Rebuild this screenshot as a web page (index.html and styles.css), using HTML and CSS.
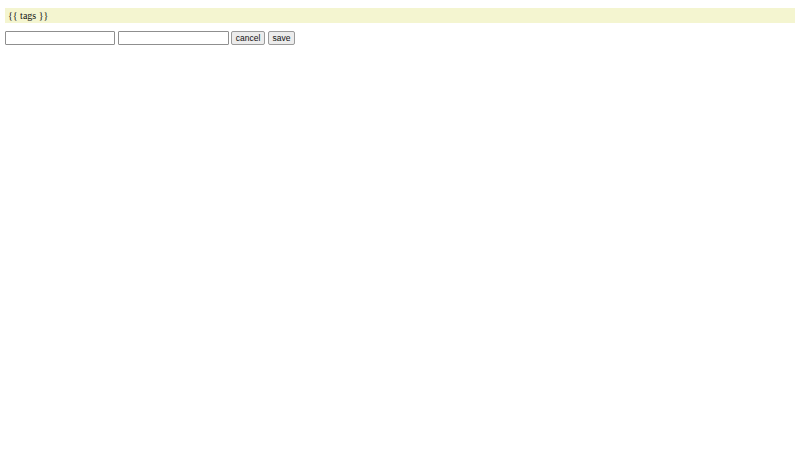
FILE: index.html
```html
<!DOCTYPE html>
<html>
<head>
<meta charset="utf-8">
<link rel="stylesheet" href="styles.css">
</head>
<body>
<div class="bar">{{ tags }}</div>
<form class="row">
  <input class="field field-first" type="text">
  <input class="field field-second" type="text">
  <button class="btn btn-cancel" type="button">cancel</button>
  <button class="btn btn-save" type="button">save</button>
</form>
</body>
</html>
```
FILE: styles.css
```css
html, body { background: #ffffff; }
body {
  margin: 8px 5px;
  font-family: "Liberation Serif", "Times New Roman", serif;
  font-size: 10px;
  color: #111111;
}
.bar {
  background: #f4f5d0;
  height: 15px;
  line-height: 15px;
  padding-left: 3px;
}
.row {
  margin: 8px 0 0;
  display: flex;
  align-items: flex-start;
  height: 14px;
}
.field {
  box-sizing: border-box;
  height: 14px;
  padding: 0;
  border: 1px solid #8f8f8f;
  border-radius: 1px;
  background: #fff;
}
.field-first { width: 110px; margin: 0 3px 0 0; }
.field-second { width: 111px; margin: 0 2px 0 0; }
.btn {
  box-sizing: border-box;
  height: 14px;
  margin: 0 3px 0 0;
  padding: 0 3px;
  border: 1px solid #9a9a9a;
  border-radius: 2px;
  background: #ececec;
  font-family: "Liberation Sans", sans-serif;
  font-size: 8.5px;
  line-height: 12px;
  color: #111;
}
.btn-cancel { width: 34px; }
.btn-save { width: 27px; }
```
